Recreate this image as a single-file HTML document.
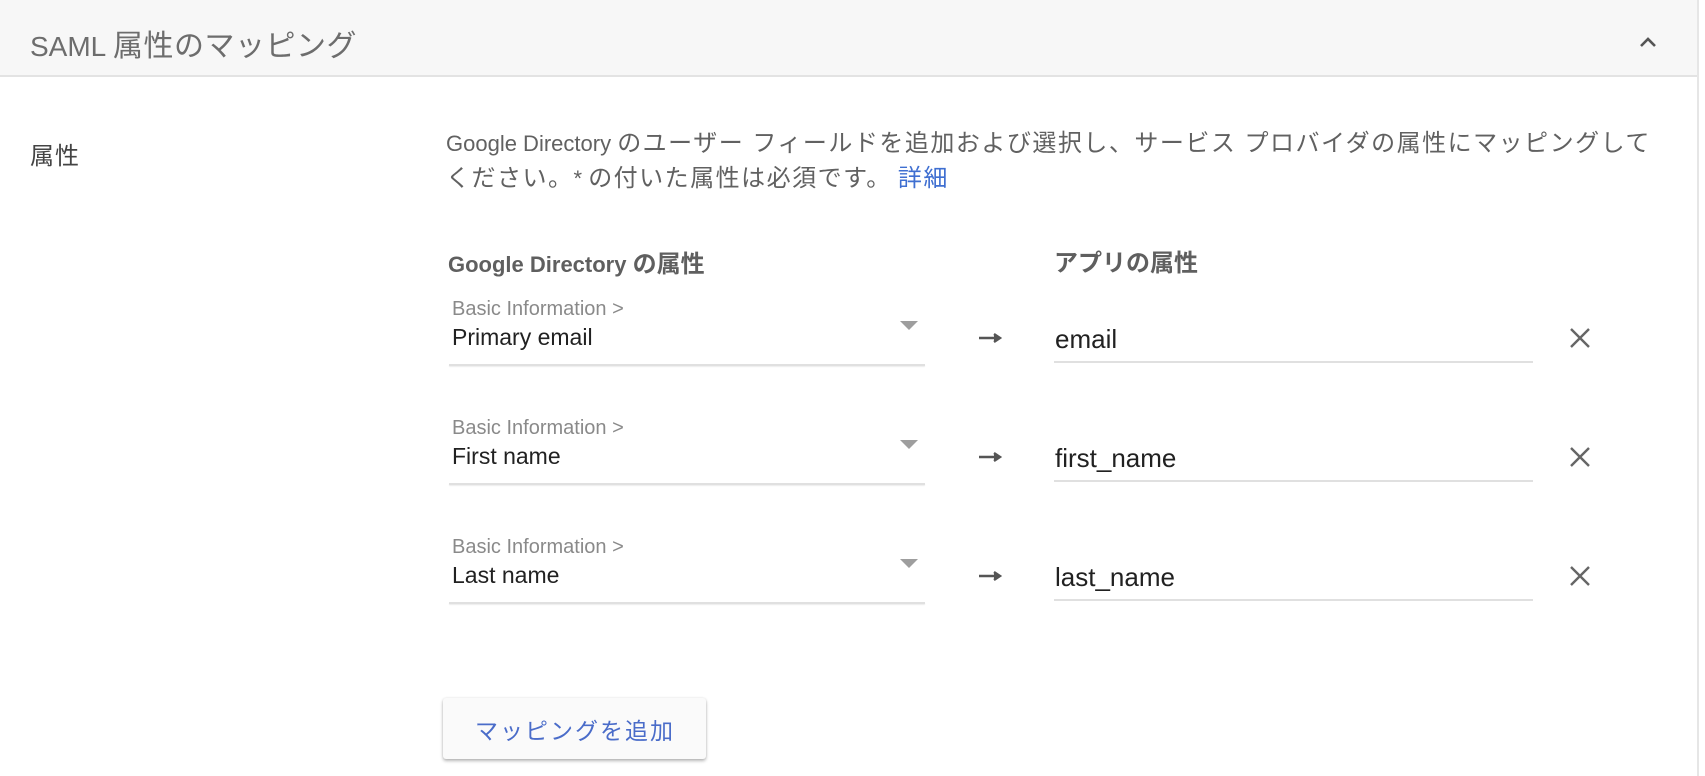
<!DOCTYPE html>
<html><head><meta charset="utf-8"><style>
*{margin:0;padding:0;box-sizing:border-box}
body{width:1705px;height:776px;background:#fff;font-family:"Liberation Sans","Noto Sans CJK JP",sans-serif;position:relative;overflow:hidden;color:#616161}
.abs{position:absolute;white-space:nowrap}
.hdr{position:absolute;left:0;top:0;width:1699px;height:77px;background:#f7f7f7;border-bottom:2px solid #e3e3e3}
.rb{position:absolute;left:1697px;top:0;width:2px;height:776px;background:#e6e6e6}
.j{font-size:24px;letter-spacing:1.5px}
.lab{font-size:20px;color:#8a8a8a}
.val{font-size:23px;color:#212121}
.ul1{position:absolute;left:449px;width:476px;height:2px;background:#e0e0e0;box-shadow:0 1px 1px rgba(0,0,0,.08)}
.ul2{position:absolute;left:1054px;width:479px;height:2px;background:#e0e0e0}
.app{font-size:26px;color:#212121}
.tri{position:absolute;width:0;height:0;border-left:9px solid transparent;border-right:9px solid transparent;border-top:9px solid #9e9e9e}
</style></head><body>
<div class="hdr"></div>
<div class="rb"></div>
<div class="abs" style="left:30px;top:21px;font-size:28px;color:#6d6d6d">SAML <span style="font-size:30px;letter-spacing:0.5px">属性のマッピング</span></div>
<svg class="abs" style="left:1637px;top:34px" width="22" height="16" viewBox="0 0 22 16"><path d="M4 12 L11 5 L18 12" fill="none" stroke="#555" stroke-width="2.6"/></svg>

<div class="abs" style="left:30px;top:136px;font-size:24px;letter-spacing:1px;color:#444">属性</div>
<div class="abs" style="left:446px;top:126px;font-size:22px;line-height:35px;color:#616161"><span>Google Directory </span><span class="j">のユーザー フィールドを追加および選択し、サービス プロバイダの属性にマッピングして</span><br><span class="j">ください。</span>* <span class="j">の付いた属性は必須です。</span> <span class="j" style="color:#3f6fd1">詳細</span></div>

<div class="abs" style="left:448px;top:244px;font-size:22px;font-weight:bold;color:#5f5f5f">Google Directory <span style="font-size:24px">の属性</span></div>
<div class="abs" style="left:1054px;top:243px;font-size:24px;font-weight:bold;color:#5f5f5f">アプリの属性</div>

<!-- row 1 -->
<div class="abs lab" style="left:452px;top:298px">Basic Information &gt;</div>
<div class="abs val" style="left:452px;top:324px">Primary email</div>
<div class="tri" style="left:900px;top:321px"></div>
<div class="ul1" style="top:364px"></div>
<svg class="abs" style="left:978px;top:332px" width="26" height="12"><path d="M1 6 H20 M16 2 L22 6 L16 10" fill="#555" stroke="#555" stroke-width="2.4"/></svg>
<div class="abs app" style="left:1055px;top:324px">email</div>
<div class="ul2" style="top:361px"></div>
<svg class="abs" style="left:1568px;top:326px" width="24" height="24"><path d="M3 3 L21 21 M21 3 L3 21" stroke="#666" stroke-width="2.4"/></svg>

<!-- row 2 -->
<div class="abs lab" style="left:452px;top:417px">Basic Information &gt;</div>
<div class="abs val" style="left:452px;top:443px">First name</div>
<div class="tri" style="left:900px;top:440px"></div>
<div class="ul1" style="top:483px"></div>
<svg class="abs" style="left:978px;top:451px" width="26" height="12"><path d="M1 6 H20 M16 2 L22 6 L16 10" fill="#555" stroke="#555" stroke-width="2.4"/></svg>
<div class="abs app" style="left:1055px;top:443px">first_name</div>
<div class="ul2" style="top:480px"></div>
<svg class="abs" style="left:1568px;top:445px" width="24" height="24"><path d="M3 3 L21 21 M21 3 L3 21" stroke="#666" stroke-width="2.4"/></svg>

<!-- row 3 -->
<div class="abs lab" style="left:452px;top:536px">Basic Information &gt;</div>
<div class="abs val" style="left:452px;top:562px">Last name</div>
<div class="tri" style="left:900px;top:559px"></div>
<div class="ul1" style="top:602px"></div>
<svg class="abs" style="left:978px;top:570px" width="26" height="12"><path d="M1 6 H20 M16 2 L22 6 L16 10" fill="#555" stroke="#555" stroke-width="2.4"/></svg>
<div class="abs app" style="left:1055px;top:562px">last_name</div>
<div class="ul2" style="top:599px"></div>
<svg class="abs" style="left:1568px;top:564px" width="24" height="24"><path d="M3 3 L21 21 M21 3 L3 21" stroke="#666" stroke-width="2.4"/></svg>

<div class="abs" style="left:443px;top:698px;width:263px;height:61px;background:#fafafa;border-radius:3px;box-shadow:0 2px 3px rgba(0,0,0,.28),0 0 2px rgba(0,0,0,.1)"></div>
<div class="abs" style="left:475px;top:712px;font-size:23px;color:#4a6cc9;letter-spacing:2px">マッピングを追加</div>
</body></html>
